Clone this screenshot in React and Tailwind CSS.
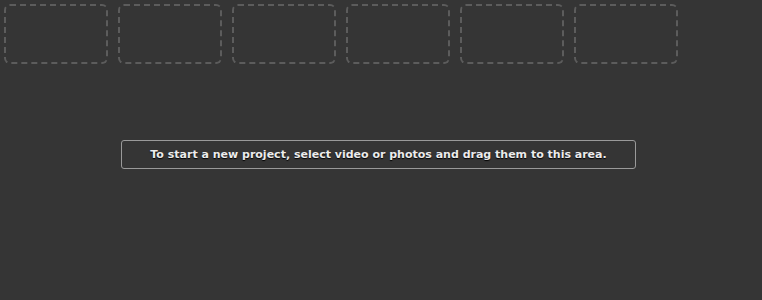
import React from "react";

const slots = [0, 1, 2, 3, 4, 5];

export default function App() {
  return (
    <div className="h-[300px] w-full bg-[#353535] overflow-hidden" style={{ fontFamily: '"DejaVu Sans", sans-serif' }}>
      <div className="flex gap-[10px] pl-[4px] pt-[4px]">
        {slots.map((s) => (
          <div
            key={s}
            className="w-[104px] h-[60px] rounded-[6px] border-2 border-dashed border-[#5c5c5c]"
          />
        ))}
      </div>
      <div className="flex pl-[121px] pt-[76px]">
        <div className="w-[515px] h-[29px] rounded-[3px] border border-[#9a9a9a] flex items-center justify-center pt-[2px]">
          <span className="text-[11px] font-bold text-[#ececec] [text-shadow:0_1px_1px_#000]">
            To start a new project, select video or photos and drag them to this area.
          </span>
        </div>
      </div>
    </div>
  );
}
